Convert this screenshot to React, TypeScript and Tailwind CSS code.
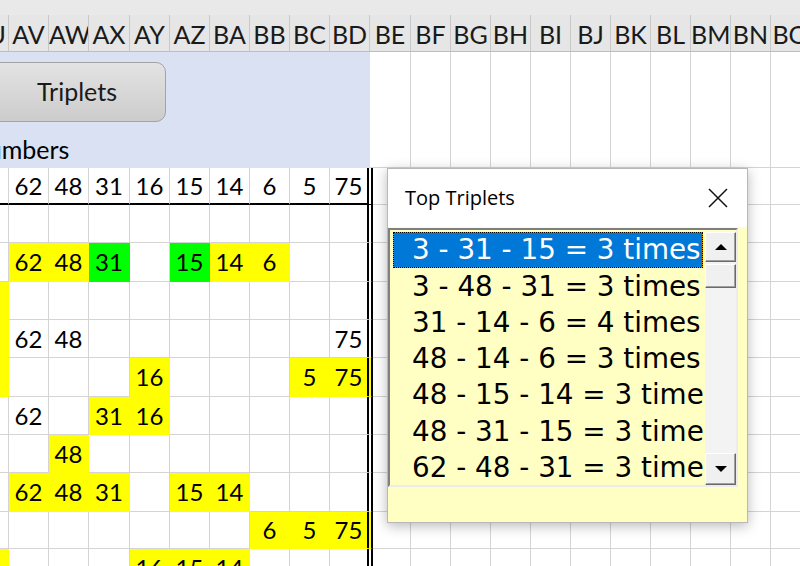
import React from 'react'

type Fill = 'y' | 'g'
type Cell = { v?: string; f?: Fill }

const cols = ['AU', 'AV', 'AW', 'AX', 'AY', 'AZ', 'BA', 'BB', 'BC', 'BD', 'BE', 'BF', 'BG', 'BH', 'BI', 'BJ', 'BK', 'BL', 'BM', 'BN', 'BO']

// header / band widths vs. body widths (BD carries the double border in the body)
const headW = (i: number) => (i === 3 || i === 10 ? 'w-[41px]' : 'w-[40px]')
const bodyW = (i: number) =>
  i === 3 ? 'w-[41px]' : i === 9 ? 'w-[43px]' : i === 10 ? 'w-[38px]' : 'w-[40px]'

const Y = (v?: string): Cell => ({ v, f: 'y' })
const G = (v: string): Cell => ({ v, f: 'g' })
const N = (v: string): Cell => ({ v })

const rows: { h: string; cells: Record<number, Cell> }[] = [
  { h: 'h-[37px]', cells: { 1: N('62'), 2: N('48'), 3: N('31'), 4: N('16'), 5: N('15'), 6: N('14'), 7: N('6'), 8: N('5'), 9: N('75') } },
  { h: 'h-[38px]', cells: {} },
  { h: 'h-[39px]', cells: { 1: Y('62'), 2: Y('48'), 3: G('31'), 5: G('15'), 6: Y('14'), 7: Y('6') } },
  { h: 'h-[38px]', cells: { 0: Y() } },
  { h: 'h-[38px]', cells: { 0: Y(), 1: N('62'), 2: N('48'), 9: N('75') } },
  { h: 'h-[39px]', cells: { 0: Y(), 4: Y('16'), 8: Y('5'), 9: Y('75') } },
  { h: 'h-[38px]', cells: { 1: N('62'), 3: Y('31'), 4: Y('16') } },
  { h: 'h-[38px]', cells: { 2: Y('48') } },
  { h: 'h-[39px]', cells: { 1: Y('62'), 2: Y('48'), 3: Y('31'), 5: Y('15'), 6: Y('14') } },
  { h: 'h-[37px]', cells: { 7: Y('6'), 8: Y('5'), 9: Y('75') } },
  { h: 'h-[38px]', cells: { 0: Y(), 4: Y('16'), 5: Y('15'), 6: Y('14') } },
]

const triplets = [
  '3 - 31 - 15 = 3 times',
  '3 - 48 - 31 = 3 times',
  '31 - 14 - 6 = 4 times',
  '48 - 14 - 6 = 3 times',
  '48 - 15 - 14 = 3 times',
  '48 - 31 - 15 = 3 times',
  '62 - 48 - 31 = 3 times',
]

function cellClass(r: number, i: number, c?: Cell) {
  const p = ['shrink-0 flex items-center justify-center border-r border-b overflow-hidden whitespace-nowrap', bodyW(i)]
  if (c?.f === 'y') p.push('bg-[#ffff00]')
  if (c?.f === 'g') p.push('bg-[#00ff00]')

  if (i === 9) p.push('border-r-[6px] border-double border-r-black')
  else if (c?.f === 'y') p.push('border-r-[#ffff00]')
  else if (c?.f === 'g') p.push('border-r-[#00ff00]')
  else p.push('border-r-[#d4d4d4]')

  if (r === 0 && i <= 9) p.push('border-b-2 border-b-black')
  else if (c?.f === 'y') p.push('border-b-[#ffff00]')
  else if (c?.f === 'g') p.push('border-b-[#00ff00]')
  else p.push('border-b-[#d4d4d4]')
  return p.join(' ')
}

const bevel =
  'bg-[#f0f0f0] border border-[#696969] border-t-white border-l-white shadow-[inset_-1px_-1px_0_#a0a0a0] flex items-center justify-center'

function TripletsDialog() {
  return (
    <div className="absolute left-[387px] top-[168px] w-[361px] h-[355px] border border-[#b8b8b8] bg-white shadow-[0_3px_12px_rgba(0,0,0,0.28)] flex flex-col">
      {/* title */}
      <div className="h-[58px] shrink-0 flex items-start justify-between">
        <span className="font-['Open_Sans',sans-serif] text-[20px] leading-[28px] pl-[17px] pt-[15px] text-black">
          Top Triplets
        </span>
        <svg width="20" height="20" viewBox="0 0 20 20" className="mt-[19px] mr-[19px]">
          <path d="M1 1 L19 19 M19 1 L1 19" stroke="#111" strokeWidth="1.5" fill="none" />
        </svg>
      </div>

      {/* body */}
      <div className="flex-1 bg-[#ffffc4] pt-px">
        <div className="w-[350px] h-[259px] border-2 border-[#808080] border-b-[#ececec] border-r-[#ececec] flex gap-[2px] pt-[2px] pl-[3px] overflow-hidden">
          <div className="w-[310px] h-[253px] overflow-hidden shrink-0">
            {triplets.map((t, i) => (
              <div
                key={t}
                className={`h-[36.3px] flex items-center pl-[18px] border whitespace-nowrap font-['DejaVu_Sans',sans-serif] text-[27.8px] leading-none ${
                  i === 0
                    ? 'bg-[#0078d7] text-white border-[#e08a00] outline-1 outline-dotted outline-black -outline-offset-1'
                    : 'border-transparent text-black'
                }`}
              >
                {t}
              </div>
            ))}
          </div>

          {/* scrollbar */}
          <div className="w-[31px] h-[253px] shrink-0 flex flex-col bg-[#f3f3f3]">
            <div className={`h-[30px] shrink-0 ${bevel}`}>
              <svg width="12" height="6" viewBox="0 0 12 6">
                <polygon points="0,6 6,0 12,6" fill="#000" />
              </svg>
            </div>
            <div className="flex-1 pt-[2px]">
              <div className={`h-[24px] ${bevel}`} />
            </div>
            <div className={`h-[32px] shrink-0 ${bevel}`}>
              <svg width="12" height="6" viewBox="0 0 12 6">
                <polygon points="0,0 12,0 6,6" fill="#000" />
              </svg>
            </div>
          </div>
        </div>
      </div>
    </div>
  )
}

export default function App() {
  return (
    <div className="relative w-[800px] h-[566px] overflow-hidden bg-white font-['Lato',sans-serif] text-black">
      <div className="-ml-[31px] w-max">
        {/* column headers */}
        <div className="h-[15px] bg-[#e9e9e9]" />
        <div className="flex h-[37px] bg-[#e6e6e6] border-b border-[#bdbdbd]">
          {cols.map((c, i) => (
            <div
              key={c}
              className={`${headW(i)} shrink-0 h-full border-r border-[#c8c8c8] overflow-hidden whitespace-nowrap text-center text-[25px] leading-[38px] text-[#1a1a1a]`}
            >
              {c}
            </div>
          ))}
        </div>

        {/* blue band with the button */}
        <div className="flex h-[116px]">
          <div className="w-[401px] shrink-0 bg-[#d9e1f2] flex flex-col">
            <button className="ml-[19px] mt-[10px] w-[178px] h-[60px] rounded-[10px] border border-[#a3a3a3] bg-linear-to-b from-[#e3e3e3] to-[#cccccc] flex items-center justify-center text-[25px] text-[#1a1a1a]">
              Triplets
            </button>
            <div className="mt-[12px] text-[25px] leading-[30px] whitespace-nowrap">Numbers</div>
          </div>
          {cols.slice(10).map((c, j) => (
            <div key={c} className={`${headW(j + 10)} shrink-0 h-full border-r border-b border-[#d4d4d4]`} />
          ))}
        </div>

        {/* grid */}
        {rows.map((row, r) => (
          <div key={r} className={`flex ${row.h}`}>
            {cols.map((c, i) => {
              const cell = row.cells[i]
              return (
                <div key={c} className={`${cellClass(r, i, cell)} text-[24px]`}>
                  {cell?.v}
                </div>
              )
            })}
          </div>
        ))}
      </div>

      <TripletsDialog />
    </div>
  )
}
